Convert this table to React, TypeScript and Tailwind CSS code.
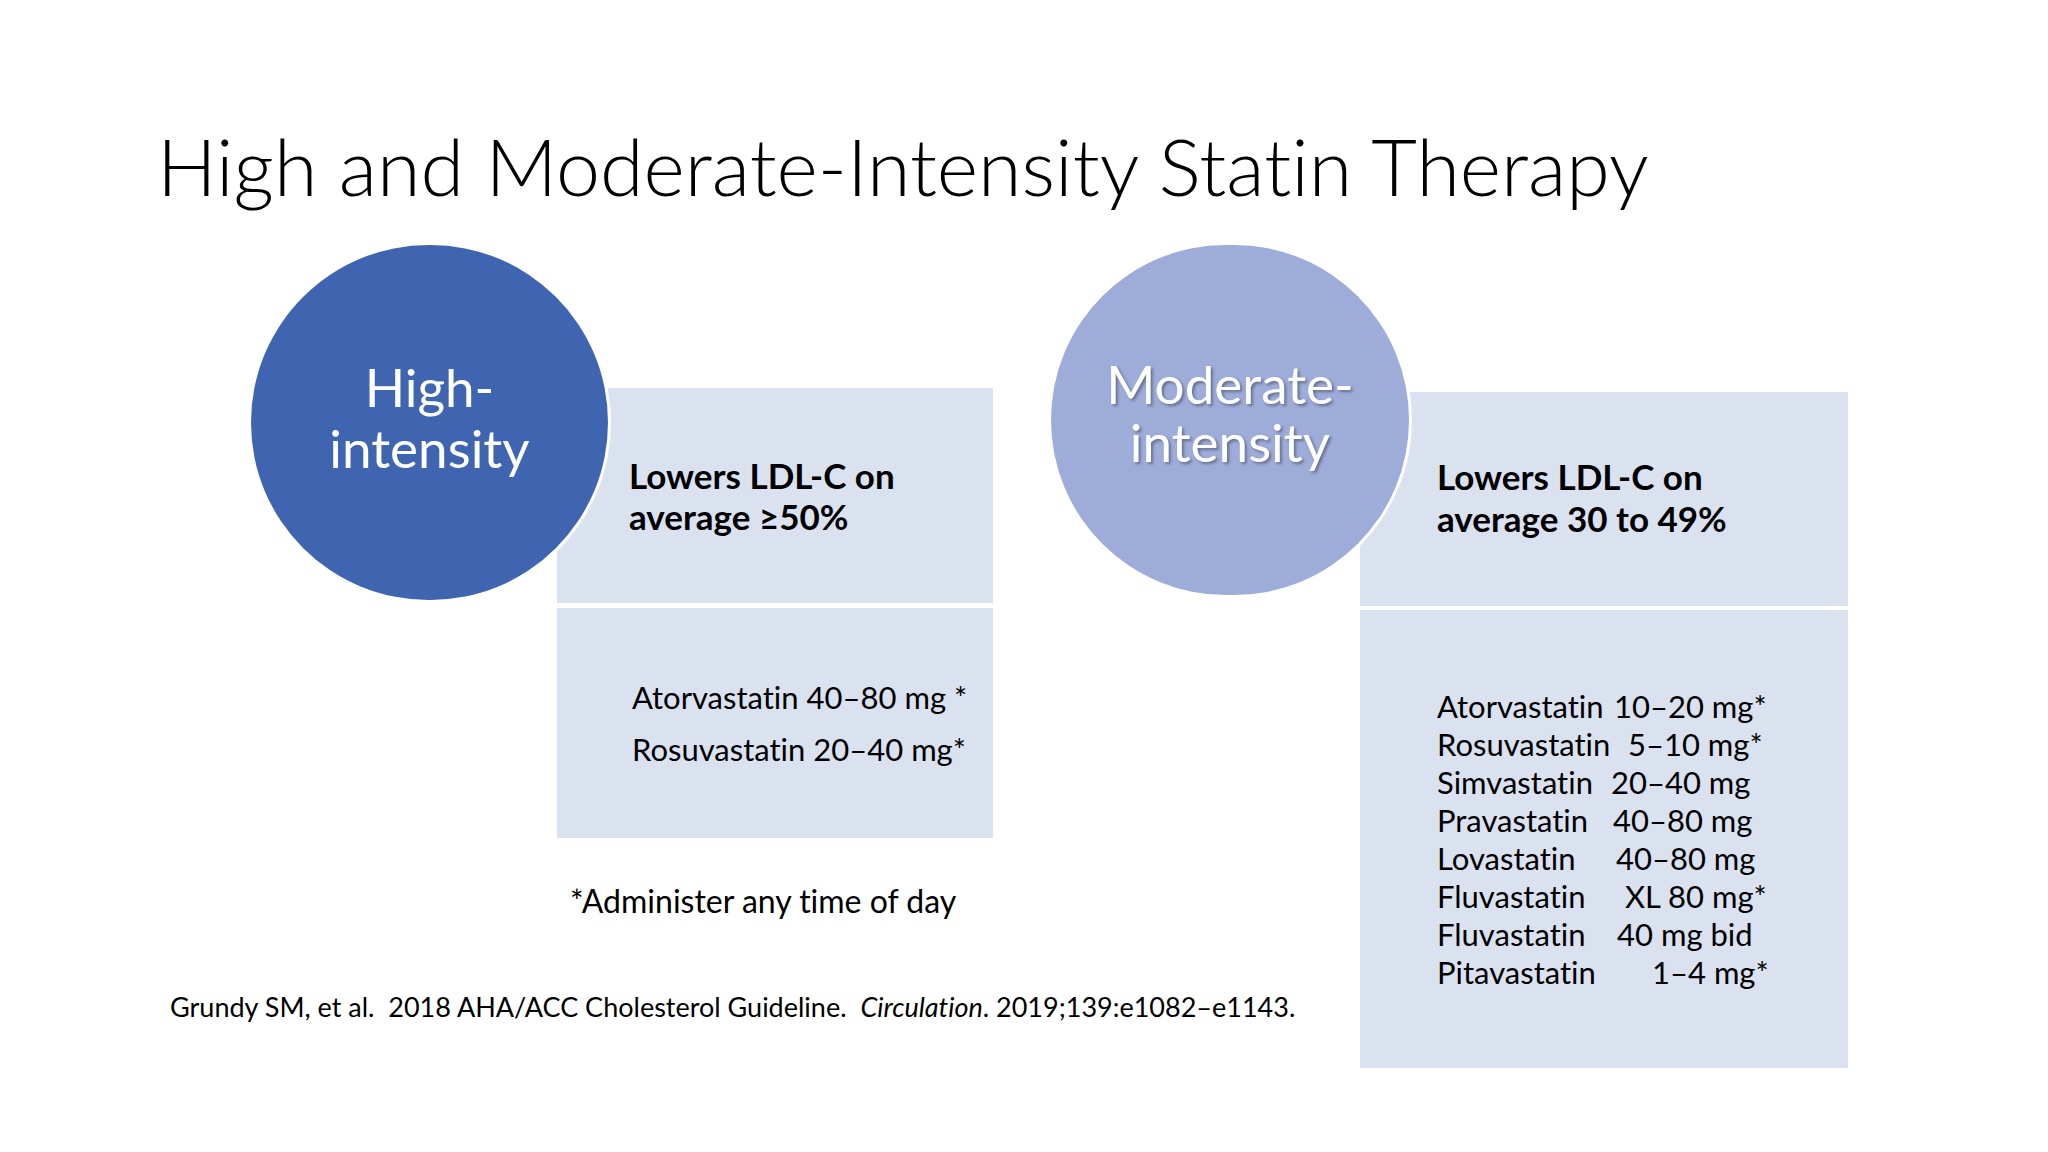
import React from "react";

export default function App() {
  return (
    <div className="w-[2048px] h-[1152px] bg-white text-black overflow-hidden [font-family:Lato,'Open_Sans',sans-serif] [font-variant-ligatures:none]">
      <h1 className="pl-[157px] pt-[118px] text-[79px] leading-[95px] font-light whitespace-nowrap">
        High and Moderate-Intensity Statin Therapy
      </h1>
      <div className="flex pt-[32px]">
        {/* left column */}
        <div className="w-[994px] shrink-0 flex flex-col pl-[170px]">
          <div className="flex pl-[81px]">
            <div className="relative z-10 shrink-0 w-[357px] h-[355px] rounded-full bg-[#3f65b0] ring-[3px] ring-white flex items-center justify-center">
              <div className="text-white text-[53px] leading-[61px] text-center -mt-[12px]">
                <div>High-</div>
                <div>intensity</div>
              </div>
            </div>
            <div className="-ml-[51px] mt-[143px] w-[436px] shrink-0 flex flex-col">
              <div className="h-[215px] bg-[#dae2f0] flex items-center pl-[72px]">
                <div className="text-[35px] leading-[41px] font-bold">
                  <div>Lowers LDL-C on</div>
                  <div>average ≥50%</div>
                </div>
              </div>
              <div className="mt-[5px] h-[230px] bg-[#dae2f0] flex items-center pl-[75px]">
                <div className="text-[31px] leading-[52px]">
                  <div>Atorvastatin 40–80 mg *</div>
                  <div>Rosuvastatin 20–40 mg*</div>
                </div>
              </div>
              <div className="mt-[45px] pl-[13px] text-[32px] leading-[35px] whitespace-nowrap">
                *Administer any time of day
              </div>
            </div>
          </div>
          <div className="mt-[75px] text-[27px] leading-[28px] whitespace-nowrap">
            Grundy SM, et al.&nbsp; 2018 AHA/ACC Cholesterol Guideline.&nbsp; <i>Circulation</i>. 2019;139:e1082–e1143.
          </div>
        </div>

        {/* right group */}
        <div className="ml-[57px] flex">
          <div className="relative z-10 shrink-0 w-[358px] h-[350px] rounded-full bg-[#9dacd9] ring-[3px] ring-white flex items-center justify-center">
            <div className="text-white text-[53px] leading-[58px] text-center -mt-[15px] [text-shadow:2px_2px_3px_rgba(0,0,0,0.35)]">
              <div>Moderate-</div>
              <div>intensity</div>
            </div>
          </div>
          <div className="-ml-[49px] mt-[147px] w-[488px] shrink-0 flex flex-col">
            <div className="h-[214px] bg-[#dae2f0] flex items-center pl-[77px]">
              <div className="text-[35px] leading-[42px] font-bold -mt-[4px]">
                <div>Lowers LDL-C on</div>
                <div>average 30 to 49%</div>
              </div>
            </div>
            <div className="mt-[4px] h-[458px] bg-[#dae2f0] flex items-center pl-[77px]">
              <div className="text-[31px] leading-[38px] whitespace-nowrap">
                <div className="flex"><span className="w-[177px] shrink-0">Atorvastatin</span><span>10–20 mg*</span></div>
                <div className="flex"><span className="w-[191px] shrink-0">Rosuvastatin</span><span>5–10 mg*</span></div>
                <div className="flex"><span className="w-[174px] shrink-0">Simvastatin</span><span>20–40 mg</span></div>
                <div className="flex"><span className="w-[176px] shrink-0">Pravastatin</span><span>40–80 mg</span></div>
                <div className="flex"><span className="w-[179px] shrink-0">Lovastatin</span><span>40–80 mg</span></div>
                <div className="flex"><span className="w-[188px] shrink-0">Fluvastatin</span><span>XL 80 mg*</span></div>
                <div className="flex"><span className="w-[180px] shrink-0">Fluvastatin</span><span>40 mg bid</span></div>
                <div className="flex"><span className="w-[215px] shrink-0">Pitavastatin</span><span>1–4 mg*</span></div>
              </div>
            </div>
          </div>
        </div>
      </div>
    </div>
  );
}
